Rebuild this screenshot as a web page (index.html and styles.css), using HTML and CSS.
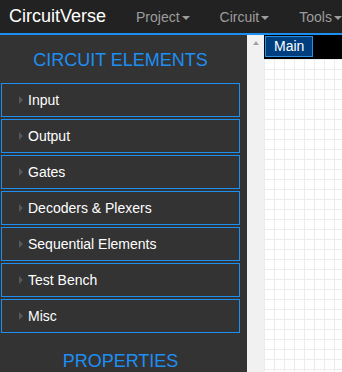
FILE: index.html
```html
<!DOCTYPE html>
<html>
<head>
<meta charset="utf-8">
<link rel="stylesheet" href="styles.css">
</head>
<body>
<nav class="navbar">
  <div class="brand">CircuitVerse</div>
  <ul class="nav">
    <li>Project<span class="caret"></span></li>
    <li>Circuit<span class="caret"></span></li>
    <li>Tools<span class="caret"></span></li>
  </ul>
</nav>
<div class="main">
  <aside class="sidebar">
    <div class="panel">
      <h2 class="heading">CIRCUIT ELEMENTS</h2>
      <ul class="accordion">
        <li class="item"><span class="arrow"></span>Input</li>
        <li class="item"><span class="arrow"></span>Output</li>
        <li class="item"><span class="arrow"></span>Gates</li>
        <li class="item"><span class="arrow"></span>Decoders &amp; Plexers</li>
        <li class="item"><span class="arrow"></span>Sequential Elements</li>
        <li class="item"><span class="arrow"></span>Test Bench</li>
        <li class="item"><span class="arrow"></span>Misc</li>
      </ul>
      <h2 class="heading heading-props">PROPERTIES</h2>
    </div>
  </aside>
  <div class="scroll"><span class="up"></span></div>
  <section class="canvas">
    <div class="tabbar"><div class="tab">Main</div></div>
    <div class="grid"></div>
  </section>
</div>
</body>
</html>
```
FILE: styles.css
```css
* { box-sizing: border-box; }
html, body {
  margin: 0;
  padding: 0;
  width: 342px;
  height: 372px;
  overflow: hidden;
  font-family: "Liberation Sans", Arial, sans-serif;
  background: #333;
}
.navbar {
  display: flex;
  height: 35px;
  background: #222;
  border-bottom: 2px solid #1e8ff2;
  white-space: nowrap;
  overflow: hidden;
}
.brand {
  flex: 0 0 121px;
  padding-left: 9px;
  color: #fff;
  font-size: 18px;
  line-height: 33px;
}
.nav {
  display: flex;
  margin: 0;
  padding: 0;
  list-style: none;
}
.nav li {
  padding: 1px 15px 0;
  color: #9d9d9d;
  font-size: 14px;
  line-height: 32px;
  flex: none;
}
.caret {
  display: inline-block;
  width: 0;
  height: 0;
  margin-left: 2px;
  vertical-align: middle;
  border-top: 4px solid #9d9d9d;
  border-left: 4px solid transparent;
  border-right: 4px solid transparent;
}
.main {
  display: flex;
  height: 337px;
}
.sidebar {
  flex: 0 0 247px;
  background: #333;
}
.panel {
  width: 241px;
  padding: 0 1px;
}
.heading {
  margin: 0;
  padding-top: 14px;
  text-align: center;
  color: #1e8ff2;
  font-size: 18px;
  font-weight: normal;
  line-height: 22px;
}
.heading-props {
  padding-top: 17px;
}
.accordion {
  list-style: none;
  margin: 12px 0 0;
  padding: 0;
  display: flex;
  flex-direction: column;
  gap: 2px;
}
.item {
  display: flex;
  align-items: center;
  height: 34px;
  border: 1px solid #1e8ff2;
  padding-left: 17px;
  color: #fff;
  font-size: 14px;
}
.arrow {
  width: 0;
  height: 0;
  margin-right: 5px;
  border-left: 4px solid #585858;
  border-top: 4px solid transparent;
  border-bottom: 4px solid transparent;
}
.scroll {
  flex: 0 0 17px;
  background: #f1f1f1;
  display: flex;
  justify-content: center;
  padding-top: 6px;
}
.up {
  width: 0;
  height: 0;
  border-bottom: 4px solid #a3a3a3;
  border-left: 3.5px solid transparent;
  border-right: 3.5px solid transparent;
}
.canvas {
  flex: 1;
  display: flex;
  flex-direction: column;
  background: #fff;
}
.tabbar {
  height: 24px;
  background: #000;
  padding: 1px 0 0 1px;
  display: flex;
  align-items: flex-start;
}
.tab {
  height: 21px;
  padding: 0 8px;
  background: #003f7f;
  border: 1px solid #2a8fe0;
  color: #fff;
  font-size: 14px;
  line-height: 19px;
}
.grid {
  flex: 1;
  background-color: #fff;
  background-image:
    linear-gradient(to right, #ececec 1px, transparent 1px),
    linear-gradient(to bottom, #ececec 1px, transparent 1px);
  background-size: 10px 10px;
  background-position: 0 0;
}
```
